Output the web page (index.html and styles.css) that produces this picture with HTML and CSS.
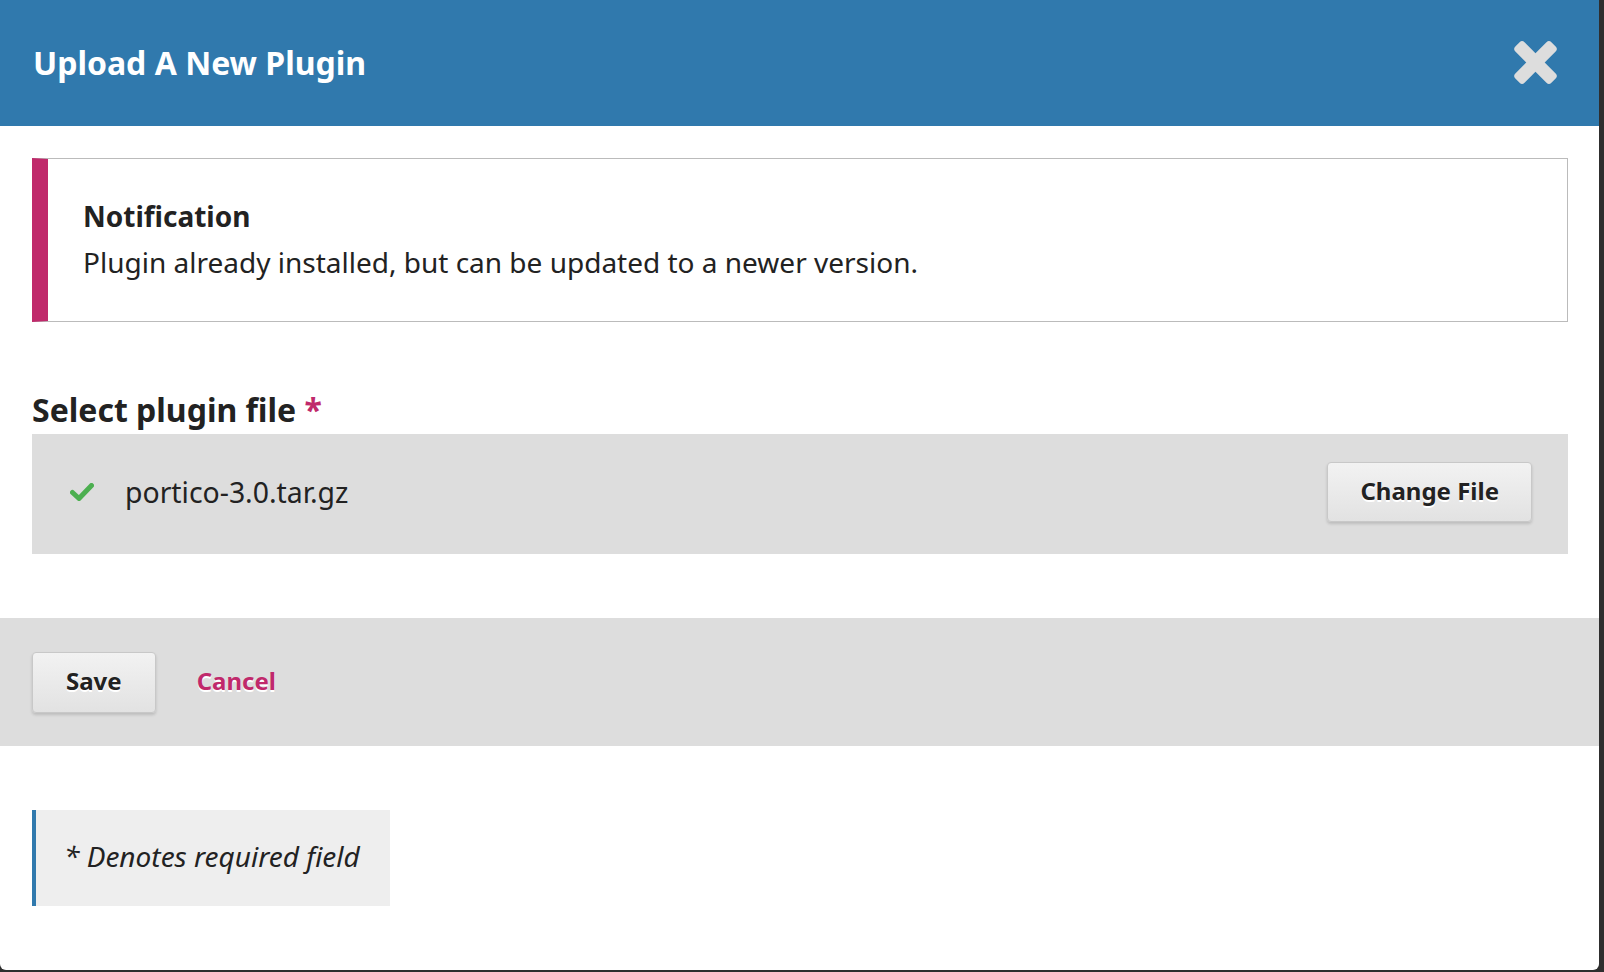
FILE: index.html
```html
<!DOCTYPE html>
<html lang="en">
<head>
	<meta charset="UTF-8">
	<title>Upload A New Plugin</title>
	<link rel="stylesheet" href="styles.css">
</head>
<body>
	<div class="modal">
		<div class="modal_header">
			<h2 class="modal_title">Upload A New Plugin</h2>
			<a class="modal_close" href="#" title="Close">
				<svg width="43" height="43" viewBox="0 0 43 43">
					<rect x="-4" y="15" width="51" height="13" rx="3.5" transform="rotate(45 21.5 21.5)" fill="#dddddd"/>
					<rect x="-4" y="15" width="51" height="13" rx="3.5" transform="rotate(-45 21.5 21.5)" fill="#dddddd"/>
				</svg>
			</a>
		</div>
		<div class="modal_body">
			<div class="notice">
				<div class="notice_title">Notification</div>
				<div class="notice_text">Plugin already installed, but can be updated to a newer version.</div>
			</div>
			<div class="field">
				<label class="field_label">Select plugin file <span class="req">*</span></label>
				<div class="upload">
					<div class="upload_file">
						<svg class="check" width="24" height="18" viewBox="0 0 24 18">
							<path d="M2.5 9.5 L9 15.5 L21.5 2.5" fill="none" stroke="#4caf50" stroke-width="5" stroke-linecap="round" stroke-linejoin="round"/>
						</svg>
						<span class="file_name">portico-3.0.tar.gz</span>
					</div>
					<button class="btn">Change File</button>
				</div>
			</div>
		</div>
		<div class="modal_footer">
			<button class="btn btn_save">Save</button>
			<a class="cancel" href="#">Cancel</a>
		</div>
		<div class="modal_bottom">
			<p class="required_note">* Denotes required field</p>
		</div>
	</div>
</body>
</html>
```
FILE: styles.css
```css
*{
	margin: 0;
	padding: 0;
	box-sizing: border-box;
}
body{
	background-color: #2e2e2e;
	font-family: "Noto Sans", "Open Sans", sans-serif;
	color: #222;
}
.modal{
	width: 1599px;
	height: 970px;
	background-color: #fff;
	border-radius: 0 0 6px 6px;
	overflow: hidden;
}
.modal_header{
	display: flex;
	align-items: center;
	justify-content: space-between;
	height: 126px;
	padding: 0 42px 2px 33px;
	background-color: #3079ad;
}
.modal_title{
	color: #fff;
	font-size: 32px;
	font-weight: bold;
}
.modal_close{
	display: block;
	height: 43px;
}
.modal_body{
	padding: 32px 31px 0 32px;
}
.notice{
	height: 164px;
	padding: 34px 35px 0;
	border: 1px solid #bbb;
	border-left: 16px solid #c0296b;
	font-size: 28px;
	line-height: 46px;
}
.notice_title{
	font-weight: bold;
}
.field{
	margin-top: 64px;
}
.field_label{
	display: block;
	font-size: 32px;
	font-weight: bold;
	line-height: 48px;
}
.req{
	color: #c0296b;
}
.upload{
	display: flex;
	align-items: center;
	justify-content: space-between;
	height: 120px;
	padding: 0 36px 4px 38px;
	background-color: #ddd;
}
.upload_file{
	display: flex;
	align-items: center;
	gap: 31px;
	font-size: 28.4px;
}
.btn{
	height: 60px;
	padding: 0 32px 3px;
	border: 1px solid #c8c8c8;
	border-radius: 4px;
	background: linear-gradient(#f2f2f2, #e2e2e2);
	box-shadow: 0 2px 3px rgba(0,0,0,.15);
	color: #222;
	font-family: inherit;
	font-size: 24px;
	font-weight: bold;
	text-shadow: 0 2px 0 #fff;
	cursor: pointer;
}
.modal_footer{
	display: flex;
	align-items: center;
	gap: 41px;
	height: 128px;
	margin-top: 64px;
	padding: 0 32px;
	background-color: #ddd;
}
.modal_footer .btn{
	height: 61px;
}
.btn_save{
	padding: 0 33px 3px;
}
.cancel{
	padding-bottom: 3px;
	color: #c0296b;
	font-size: 24px;
	font-weight: bold;
	text-decoration: none;
	text-shadow: 0 2px 0 #fff;
}
.modal_bottom{
	padding: 64px 32px 0;
}
.required_note{
	display: inline-block;
	height: 96px;
	padding: 0 30px 4px 28px;
	border-left: 4px solid #3079ad;
	background-color: #eee;
	font-size: 28px;
	font-style: italic;
	line-height: 92px;
}
```
